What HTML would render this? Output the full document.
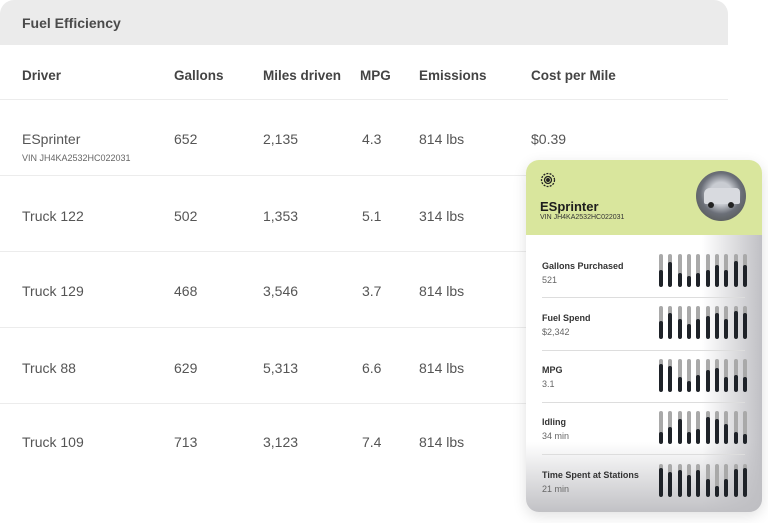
<!DOCTYPE html>
<html><head><style>
*{margin:0;padding:0;box-sizing:border-box}
body{width:768px;height:523px;background:#fff;font-family:"Liberation Sans",sans-serif;position:relative;overflow:hidden}
.panel{position:absolute;left:0;top:0;width:728px;height:523px;background:#fff}
.ph{position:absolute;left:0;top:0;width:728px;height:45px;background:#ebebeb;border-radius:14px 14px 0 0}
.ph span{position:absolute;left:22px;top:15px;font-size:14px;font-weight:bold;color:#4a4a4a}
.t{position:absolute;font-size:14px;color:#555;white-space:nowrap}
.h{font-weight:bold;color:#444;font-size:13.5px}
.line{position:absolute;left:0;width:728px;height:1px;background:#ececec}
.card{position:absolute;left:526px;top:160px;width:236px;height:352px;border-radius:13px;overflow:hidden;background:#fff;box-shadow:0 4px 14px rgba(0,0,0,.12)}
.top{position:absolute;left:0;top:0;width:236px;height:75px;background:#d9e69d}
.shr{position:absolute;right:0;top:75px;width:60px;height:277px;background:linear-gradient(90deg,rgba(200,200,203,0),rgba(185,185,190,.9))}
.shb{position:absolute;left:0;bottom:0;width:236px;height:70px;background:linear-gradient(180deg,rgba(200,200,203,0),rgba(190,190,194,.95))}
.lab{position:absolute;left:16px;font-size:9px;font-weight:bold;color:#333}
.val{position:absolute;left:16px;font-size:9px;color:#666}
.sep{position:absolute;left:16px;width:203px;height:1px;background:#ddd}
.bar{position:absolute;width:4px;height:33px;border-radius:2px;background:#a9a9a9;overflow:hidden}
.bar i{position:absolute;left:0;bottom:0;width:4px;border-radius:2px;background:#1e2228}
</style></head><body>
<div class="panel">
<div class="ph"><span>Fuel Efficiency</span></div>
<div class="t h" style="left:22px;top:68px">Driver</div>
<div class="t h" style="left:174px;top:68px">Gallons</div>
<div class="t h" style="left:263px;top:68px">Miles driven</div>
<div class="t h" style="left:360px;top:68px">MPG</div>
<div class="t h" style="left:419px;top:68px">Emissions</div>
<div class="t h" style="left:531px;top:68px">Cost per Mile</div>
<div class="line" style="top:99px"></div>
<div class="t" style="left:22px;top:131px">ESprinter</div>
<div class="t" style="left:22px;top:153px;font-size:9px;color:#666">VIN JH4KA2532HC022031</div>
<div class="t" style="left:174px;top:131px">652</div><div class="t" style="left:263px;top:131px">2,135</div><div class="t" style="left:362px;top:131px">4.3</div><div class="t" style="left:419px;top:131px">814 lbs</div><div class="t" style="left:531px;top:131px">$0.39</div>
<div class="line" style="top:175px"></div>
<div class="t" style="left:22px;top:208px">Truck 122</div><div class="t" style="left:174px;top:208px">502</div><div class="t" style="left:263px;top:208px">1,353</div><div class="t" style="left:362px;top:208px">5.1</div><div class="t" style="left:419px;top:208px">314 lbs</div>
<div class="line" style="top:251px"></div>
<div class="t" style="left:22px;top:283px">Truck 129</div><div class="t" style="left:174px;top:283px">468</div><div class="t" style="left:263px;top:283px">3,546</div><div class="t" style="left:362px;top:283px">3.7</div><div class="t" style="left:419px;top:283px">814 lbs</div>
<div class="line" style="top:327px"></div>
<div class="t" style="left:22px;top:360px">Truck 88</div><div class="t" style="left:174px;top:360px">629</div><div class="t" style="left:263px;top:360px">5,313</div><div class="t" style="left:362px;top:360px">6.6</div><div class="t" style="left:419px;top:360px">814 lbs</div>
<div class="line" style="top:403px"></div>
<div class="t" style="left:22px;top:434px">Truck 109</div><div class="t" style="left:174px;top:434px">713</div><div class="t" style="left:263px;top:434px">3,123</div><div class="t" style="left:362px;top:434px">7.4</div><div class="t" style="left:419px;top:434px">814 lbs</div>
</div>
<div class="card">
<div class="top">
<svg style="position:absolute;left:14px;top:12px" width="16" height="16" viewBox="0 0 16 16" fill="none" stroke="#222" stroke-width="1.3"><circle cx="8" cy="8" r="6.5" stroke-dasharray="2 1.2"/><circle cx="8" cy="8" r="3.5"/><circle cx="8" cy="8" r="1.3" fill="#222"/></svg>
<div style="position:absolute;left:14px;top:39px;font-size:13px;font-weight:bold;color:#1d1d1d">ESprinter</div>
<div style="position:absolute;left:14px;top:54px;font-size:7px;color:#333">VIN JH4KA2532HC022031</div>
<div style="position:absolute;left:170px;top:11px;width:50px;height:50px;border-radius:50%;background:radial-gradient(circle at 50% 45%,#c9ccd2 0 30%,#6b6f78 55%,#4a4d44 100%);overflow:hidden">
<div style="position:absolute;left:8px;top:17px;width:36px;height:16px;background:#d8dadf;border-radius:6px 4px 2px 2px"></div>
<div style="position:absolute;left:12px;top:31px;width:6px;height:6px;border-radius:50%;background:#222"></div>
<div style="position:absolute;left:32px;top:31px;width:6px;height:6px;border-radius:50%;background:#222"></div>
</div>
</div>
<div class="shr"></div><div class="shb"></div>
<div class="lab" style="top:101px">Gallons Purchased</div><div class="val" style="top:115px">521</div>
<div class="sep" style="top:137px"></div>
<div class="lab" style="top:153px">Fuel Spend</div><div class="val" style="top:167px">$2,342</div>
<div class="sep" style="top:190px"></div>
<div class="lab" style="top:205px">MPG</div><div class="val" style="top:219px">3.1</div>
<div class="sep" style="top:242px"></div>
<div class="lab" style="top:257px">Idling</div><div class="val" style="top:271px">34 min</div>
<div class="sep" style="top:294px"></div>
<div class="lab" style="top:310px">Time Spent at Stations</div><div class="val" style="top:324px">21 min</div>
<div id="bars"></div>
</div>
<script>
var rows=[[94,[.52,.76,.42,.32,.42,.52,.66,.52,.8,.66]],[146,[.55,.8,.6,.45,.6,.7,.8,.6,.85,.8]],[199,[.85,.79,.44,.32,.5,.67,.74,.44,.5,.44]],[251,[.36,.53,.75,.36,.45,.83,.75,.6,.36,.3]],[304,[.88,.76,.81,.66,.81,.54,.34,.54,.84,.88]]];
var h='';rows.forEach(function(r){r[1].forEach(function(f,i){h+='<div class="bar" style="left:'+(133+i*9.33).toFixed(1)+'px;top:'+r[0]+'px"><i style="height:'+Math.round(33*f)+'px"></i></div>';});});
document.getElementById('bars').innerHTML=h;
</script>
</body></html>
